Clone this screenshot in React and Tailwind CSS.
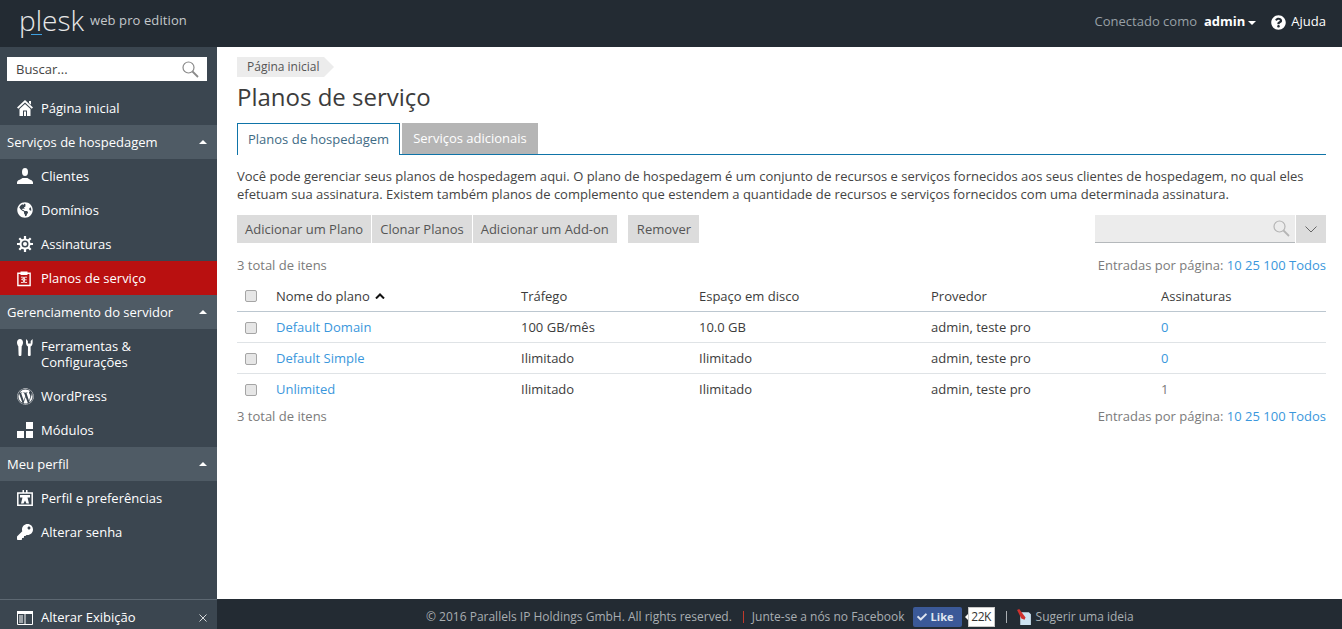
import { FaGlobeAmericas, FaWordpress, FaKey, FaQuestionCircle, FaCheck } from "react-icons/fa";

function HomeIcon() {
  return (
    <svg viewBox="0 0 16 16" className="w-4 h-4" fill="#fff">
      <path d="M8 0l8 7.500-1.300 1.200L8 2.600 1.300 8.700 0 7.500z" />
      <path d="M12 1h2v3.800l-2-1.800z" />
      <path fillRule="evenodd" d="M2.500 9 8 4l5.500 5v7h-11zM6 10.500V16h4v-5.500z" />
      <path d="M7 11.500h2V16H7z" />
    </svg>
  );
}

function UserIcon() {
  return (
    <svg viewBox="0 0 16 16" className="w-4 h-4" fill="#fff">
      <ellipse cx="8" cy="4" rx="3" ry="4" />
      <path d="M0 16v-1.500c0-2.500 4-3 5.500-4.500h5c1.500 1.500 5.500 2 5.500 4.500V16z" />
    </svg>
  );
}

function GearIcon() {
  return (
    <svg viewBox="0 0 16 16" className="w-4 h-4" fill="none" stroke="#fff">
      <path d="M8 0v16M0 8h16M2.300 2.300l11.400 11.400M13.700 2.300 2.300 13.700" strokeWidth="2.200" />
      <circle cx="8" cy="8" r="4.500" fill="#3b4650" strokeWidth="2" />
      <circle cx="8" cy="8" r="2" fill="#fff" stroke="none" />
    </svg>
  );
}

function ClipboardIcon() {
  return (
    <svg viewBox="0 0 16 18" className="w-[14px] h-[17px]" fill="none">
      <path d="M1 3h14v14H1z" stroke="#fff" strokeWidth="1.6" />
      <path d="M4 1h8v4H4z" fill="#fff" />
      <path d="M4.500 7.500h3v2h-2v1h2v3h-3M11.500 7.500h-3v6h3M8.500 10.500h2.500" stroke="#fff" strokeWidth="1" />
    </svg>
  );
}

function ToolsIcon() {
  return (
    <svg viewBox="0 0 16 17" className="w-4 h-[17px]" fill="#fff">
      <path d="M0 3.500C0 1.500 1.300 0 3 0s3 1.500 3 3.500c0 2-.8 3-1.300 3.800L4.400 16c0 .7-.6 1-1.400 1s-1.400-.3-1.400-1l-.3-8.700C.8 6.500 0 5.500 0 3.500z" />
      <path d="M8.600 0v3.800c0 2 .9 3.200 2 3.800L10.500 16c0 .7.600 1 1.400 1s1.400-.3 1.400-1l-.1-8.400c1.100-.6 2-1.800 2-3.800V0l-1.900 2v2.500h-2.800V2L8.600 0z" transform="translate(.4 0)" />
    </svg>
  );
}

function ModulesIcon() {
  return (
    <svg viewBox="0 0 16 16" className="w-4 h-4" fill="#fff">
      <rect x="9" y="0" width="7" height="7" />
      <rect x="0" y="9" width="7" height="7" />
      <rect x="9" y="9" width="7" height="7" />
    </svg>
  );
}

function ProfileIcon() {
  return (
    <svg viewBox="0 0 16 16" className="w-4 h-4" fill="none">
      <path d="M.8 3h14.400v12.200H.8z" stroke="#fff" strokeWidth="1.500" />
      <path d="M5.500 0h1.500v3H5.500zM9 0h1.500v3H9z" fill="#fff" />
      <path d="M3 5h10v2.500h-2.500l1.500 6H9.500L8 10.500 6.500 13.500H4l1.500-6H3z" fill="#fff" />
    </svg>
  );
}

function ViewIcon() {
  return (
    <svg viewBox="0 0 16 14" className="w-4 h-[14px]" fill="none">
      <path d="M.5.500h15v13H.5z" stroke="#fff" />
      <path d="M0 0h16v3H0z" fill="#fff" />
      <path d="M2 5h4M2 7h4M2 9h4M2 11h4" stroke="#fff" />
      <path d="M8 3v10" stroke="#fff" />
    </svg>
  );
}

function SearchIcon({ color }) {
  return (
    <svg viewBox="0 0 17 17" className="w-[17px] h-[17px]" fill="none" stroke={color}>
      <circle cx="6.500" cy="6.500" r="5.500" strokeWidth="1.200" />
      <path d="M10.500 10.500 16 16" strokeWidth="1.800" />
    </svg>
  );
}

function SideItem({ icon, active, children }) {
  return (
    <div className={`flex items-center min-h-[34px] pl-[17px] text-white ${active ? "bg-[#b91010]" : ""}`}>
      <span className="w-[24px] flex justify-start shrink-0">{icon}</span>
      <span className="leading-[16px]">{children}</span>
    </div>
  );
}

function SideSection({ children }) {
  return (
    <div className="flex items-center justify-between h-[34px] pl-[7px] pr-[10px] bg-[#4f5b65] text-white">
      <span className="pt-[1px]">{children}</span>
      <span className="w-0 h-0 border-x-[4px] border-x-transparent border-b-[4px] border-b-white"></span>
    </div>
  );
}

function PerPage() {
  return (
    <span className="text-[#7b7b7b]">
      Entradas por página: <a className="text-[#3a97dc]">10</a> <a className="text-[#3a97dc]">25</a>{" "}
      <a className="text-[#3a97dc]">100</a> <a className="text-[#3a97dc]">Todos</a>
    </span>
  );
}

function Check() {
  return <span className="block w-[12px] h-[12px] rounded-[2px] border border-[#a5a5a5] bg-[#e6e6e6]"></span>;
}

const rows = [
  { name: "Default Domain", traffic: "100 GB/mês", disk: "10.0 GB", subs: "0", link: true },
  { name: "Default Simple", traffic: "Ilimitado", disk: "Ilimitado", subs: "0", link: true },
  { name: "Unlimited", traffic: "Ilimitado", disk: "Ilimitado", subs: "1", link: false },
];

export default function App() {
  return (
    <div className="h-screen flex flex-col overflow-hidden bg-white text-[13px] text-[#3c3c3c] font-['Open_Sans',sans-serif]">
      <header className="h-[47px] shrink-0 flex items-center justify-between bg-[#232b33] pl-[19px] pr-[16px]">
        <div className="flex items-center">
          <span className="relative text-[28px] leading-[40px] font-light text-[#e8e8e8] -mt-[8px]">
            plesk
            <span className="absolute left-[12px] top-[34px] w-[11px] h-[1px] bg-[#3ea0e0]"></span>
          </span>
          <span className="ml-[6px] -mt-[5px] text-[#c4c8cb] tracking-[0.1px]">web pro edition</span>
        </div>
        <div className="flex items-center pb-[3px] text-white">
          <span className="text-[#98a0a6]">Conectado como</span>
          <span className="ml-[7px] font-bold">admin</span>
          <span className="ml-[3px] mt-[2px] w-0 h-0 border-x-[4px] border-x-transparent border-t-[4px] border-t-white"></span>
          <FaQuestionCircle className="ml-[15px] text-[15px]" />
          <span className="ml-[5px]">Ajuda</span>
        </div>
      </header>

      <div className="flex-1 flex min-h-0">
        <aside className="w-[217px] shrink-0 flex flex-col bg-[#3b4650]">
          <div className="flex-1 pt-[10px]">
            <div className="ml-[7px] mb-[10px] w-[200px] h-[24px] flex items-center justify-between bg-white pl-[9px] pr-[8px] text-[#444]">
              <span className="pt-[1px]">Buscar...</span>
              <SearchIcon color="#8a8a8a" />
            </div>
            <SideItem icon={<HomeIcon />}>Página inicial</SideItem>
            <SideSection>Serviços de hospedagem</SideSection>
            <SideItem icon={<UserIcon />}>Clientes</SideItem>
            <SideItem icon={<FaGlobeAmericas className="text-[16px] text-white" />}>Domínios</SideItem>
            <SideItem icon={<GearIcon />}>Assinaturas</SideItem>
            <SideItem active icon={<ClipboardIcon />}>Planos de serviço</SideItem>
            <SideSection>Gerenciamento do servidor</SideSection>
            <div className="flex items-start h-[50px] pl-[17px] pt-[9px] text-white">
              <span className="w-[24px] shrink-0 pt-[1px]"><ToolsIcon /></span>
              <span className="leading-[16px]">Ferramentas &<br />Configurações</span>
            </div>
            <SideItem icon={<FaWordpress className="text-[17px] text-white" />}>WordPress</SideItem>
            <SideItem icon={<ModulesIcon />}>Módulos</SideItem>
            <SideSection>Meu perfil</SideSection>
            <SideItem icon={<ProfileIcon />}>Perfil e preferências</SideItem>
            <SideItem icon={<FaKey className="text-[16px] text-white" />}>Alterar senha</SideItem>
          </div>
          <div className="h-[30px] shrink-0 flex items-center justify-between border-t border-[#5d6872] pl-[17px] pr-[10px] pt-[6px] text-white">
            <span className="flex items-center">
              <span className="w-[24px]"><ViewIcon /></span>
              Alterar Exibição
            </span>
            <svg viewBox="0 0 8 8" className="w-2 h-2" fill="none" stroke="#d5d8da"><path d="M.5.500l7 7M7.500.500l-7 7" /></svg>
          </div>
        </aside>

        <div className="flex-1 flex flex-col min-w-0">
          <main className="flex-1 pl-[20px] pr-[16px] pt-[10px]">
            <div className="flex">
              <span className="h-[20px] leading-[20px] pl-[10px] pr-[5px] bg-[#ececec] text-[12px] text-[#555]">Página inicial</span>
              <span className="w-0 h-0 border-y-[10px] border-y-transparent border-l-[10px] border-l-[#ececec]"></span>
            </div>
            <h1 className="mt-[3px] text-[24px] leading-[33px] text-[#3c3c3c]">Planos de serviço</h1>

            <div className="mt-[10px] flex items-end border-b border-[#0f74a8] h-[32px]">
              <div className="h-[32px] -mb-[1px] px-[10px] leading-[30px] bg-white border border-b-0 border-[#0f74a8] text-[#3f6b85]">Planos de hospedagem</div>
              <div className="ml-[2px] h-[31px] px-[11px] leading-[31px] bg-[#b5b5b5] text-white">Serviços adicionais</div>
            </div>

            <p className="mt-[12px] leading-[18px] text-[#444]">
              Você pode gerenciar seus planos de hospedagem aqui. O plano de hospedagem é um conjunto de recursos e serviços fornecidos aos seus clientes de hospedagem, no qual eles efetuam sua assinatura. Existem também planos de complemento que estendem a quantidade de recursos e serviços fornecidos com uma determinada assinatura.
            </p>

            <div className="mt-[12px] flex justify-between h-[28px]">
              <div className="flex text-[#555]">
                <button className="px-[8px] pt-[1px] bg-[#dcdcdc]">Adicionar um Plano</button>
                <button className="ml-[1px] px-[8px] pt-[1px] bg-[#dcdcdc]">Clonar Planos</button>
                <button className="ml-[1px] px-[8px] pt-[1px] bg-[#dcdcdc]">Adicionar um Add-on</button>
                <button className="ml-[11px] pl-[9px] pr-[8px] pt-[1px] bg-[#dcdcdc]">Remover</button>
              </div>
              <div className="flex">
                <div className="w-[200px] flex items-center justify-end pr-[5px] bg-[#ececec] border-b border-[#b4b8bb]">
                  <SearchIcon color="#b5b5b5" />
                </div>
                <div className="ml-[1px] w-[30px] flex items-center justify-center bg-[#dcdcdc]">
                  <svg viewBox="0 0 12 7" className="w-[12px] h-[7px]" fill="none" stroke="#666"><path d="M.5.500 6 6 11.500.500" /></svg>
                </div>
              </div>
            </div>

            <div className="mt-[12px] flex justify-between h-[20px] leading-[20px]">
              <span className="text-[#7b7b7b]">3 total de itens</span>
              <PerPage />
            </div>

            <table className="mt-[6px] w-full table-fixed border-collapse">
              <colgroup>
                <col className="w-[39px]" />
                <col className="w-[245px]" />
                <col className="w-[178px]" />
                <col className="w-[232px]" />
                <col className="w-[230px]" />
                <col />
              </colgroup>
              <thead>
                <tr className="h-[30px] border-b border-[#bcc7d0] text-left">
                  <th className="pl-[8px] pt-[1px] font-normal"><Check /></th>
                  <th className="pt-[1px] font-normal">
                    Nome do plano
                    <svg viewBox="0 0 10 6" className="inline-block ml-[5px] mb-[2px] w-[10px] h-[6px]" fill="none" stroke="#111" strokeWidth="2"><path d="M1 5.500 5 1.500l4 4" /></svg>
                  </th>
                  <th className="pt-[1px] font-normal">Tráfego</th>
                  <th className="pt-[1px] font-normal">Espaço em disco</th>
                  <th className="pt-[1px] font-normal">Provedor</th>
                  <th className="pt-[1px] font-normal">Assinaturas</th>
                </tr>
              </thead>
              <tbody>
                {rows.map((row) => (
                  <tr key={row.name} className="h-[31px] border-b border-[#dfe3e6] last:border-b-0">
                    <td className="pl-[8px] pt-[2px]"><Check /></td>
                    <td className="pt-[2px] text-[#3a97dc]">{row.name}</td>
                    <td className="pt-[2px]">{row.traffic}</td>
                    <td className="pt-[2px]">{row.disk}</td>
                    <td className="pt-[2px]">admin, teste pro</td>
                    <td className={row.link ? "pt-[2px] text-[#3a97dc]" : "pt-[2px] text-[#7b7b7b]"}>{row.subs}</td>
                  </tr>
                ))}
              </tbody>
            </table>

            <div className="mt-[2px] flex justify-between h-[20px] leading-[20px]">
              <span className="text-[#7b7b7b]">3 total de itens</span>
              <PerPage />
            </div>
          </main>

          <footer className="h-[30px] shrink-0 flex items-center bg-[#232b33] pl-[209px] pt-[6px] text-[12px] text-[#a9aeb2]">
            <span>© 2016 Parallels IP Holdings GmbH. All rights reserved.</span>
            <span className="ml-[11px] w-[1px] h-[12px] bg-[#c0392b]"></span>
            <span className="ml-[8px]">Junte-se a nós no Facebook</span>
            <span className="ml-[8px] h-[20px] w-[49px] pl-[4px] flex items-center bg-[#3b5998] rounded-[2px] text-[11px] font-bold text-[#dfe5f0]">
              <FaCheck className="text-[10px] mr-[4px]" />Like
            </span>
            <span className="relative ml-[6px] h-[20px] w-[27px] text-center leading-[18px] bg-white border border-[#c8c8c8] text-[#333] tracking-[-0.5px]">
              22K
              <span className="absolute -left-[4px] top-[6px] w-0 h-0 border-y-[3px] border-y-transparent border-r-[3px] border-r-white"></span>
            </span>
            <span className="ml-[11px] w-[1px] h-[12px] bg-[#a9aeb2]"></span>
            <svg viewBox="0 0 14 15" className="ml-[10px] w-[15px] h-[16px]">
              <path d="M3 3h8l2 2v10H3z" fill="#cfe3f2" />
              <path d="M0 1 2 0l6 8-1 2-3-1z" fill="#d0312d" />
            </svg>
            <span className="ml-[4px]">Sugerir uma ideia</span>
          </footer>
        </div>
      </div>
    </div>
  );
}
